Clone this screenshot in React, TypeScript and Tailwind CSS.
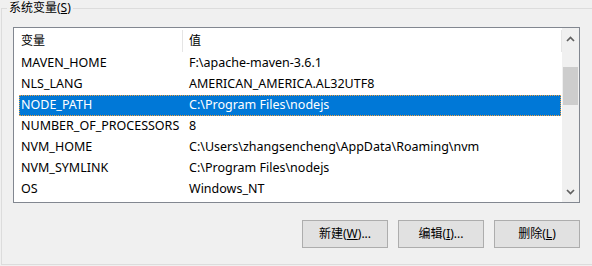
import React from "react";

const rows: [string, string][] = [
  ["MAVEN_HOME", "F:\\apache-maven-3.6.1"],
  ["NLS_LANG", "AMERICAN_AMERICA.AL32UTF8"],
  ["NODE_PATH", "C:\\Program Files\\nodejs"],
  ["NUMBER_OF_PROCESSORS", "8"],
  ["NVM_HOME", "C:\\Users\\zhangsencheng\\AppData\\Roaming\\nvm"],
  ["NVM_SYMLINK", "C:\\Program Files\\nodejs"],
  ["OS", "Windows_NT"],
];

const font = {
  fontFamily: '"Noto Sans", "Noto Sans CJK SC", sans-serif',
};

function Chevron({ up }: { up?: boolean }) {
  return (
    <svg width="9" height="6" viewBox="0 0 9 6" className="block">
      <path
        d={up ? "M1 5 L4.5 1.5 L8 5" : "M1 1 L4.5 4.5 L8 1"}
        fill="none"
        stroke="#606060"
        strokeWidth="1.7"
      />
    </svg>
  );
}

function Btn({ label, k }: { label: string; k: string }) {
  return (
    <button className="w-[86px] h-[28px] border border-[#adadad] bg-[#e1e1e1] text-[12px] text-black flex items-center justify-center leading-none">
      {label}(<span className="underline">{k}</span>){k === "L" ? "" : "..."}
    </button>
  );
}

export default function App() {
  return (
    <div
      className="w-[592px] h-[266px] bg-[#f0f0f0] overflow-hidden text-[12px] text-black"
      style={font}
    >
      <fieldset className="ml-[1px] w-[620px] h-[265px] border border-[#dcdcdc] pl-[11px]">
        <legend className="ml-[-6px] px-[2px] leading-[16px] text-[12px]">
          系统变量(<span className="underline">S</span>)
        </legend>
        <div className="mt-[11px] w-[567px] h-[176px] border border-[#828790] bg-white flex">
          <div className="flex-1 flex flex-col">
            <div className="h-[25px] flex items-start pl-[7px]">
              <div className="w-[161px] pt-[5px] leading-[16px]">变量</div>
              <div className="w-px h-[22px] bg-[#e5e5e5] mt-[2px]" />
              <div className="flex-1 pl-[6px] pt-[5px] leading-[16px]">值</div>
              <div className="w-px h-[22px] bg-[#e5e5e5] mt-[2px]" />
            </div>
            <div className="pl-[5px] pr-[1px] text-[12.5px]">
              {rows.map(([k, v]) => {
                const sel = k === "NODE_PATH";
                return (
                  <div
                    key={k}
                    className={
                      "h-[21px] flex items-center whitespace-nowrap " +
                      (sel
                        ? "bg-[#0078d7] text-white border border-dotted border-[#f0a040]"
                        : "border border-transparent")
                    }
                  >
                    <div className="w-[169px] pl-[1px]">{k}</div>
                    <div className="flex-1">{v}</div>
                  </div>
                );
              })}
            </div>
          </div>
          <div className="w-[17px] bg-[#f0f0f0] flex flex-col items-center">
            <div className="h-[17px] flex items-center justify-center mt-[2px]">
              <Chevron up />
            </div>
            <div className="mt-[20px] w-[15px] h-[38px] bg-[#cdcdcd]" />
            <div className="flex-1" />
            <div className="h-[17px] flex items-center justify-center mb-[2px]">
              <Chevron />
            </div>
          </div>
        </div>
        <div className="w-[567px] mt-[17px] flex justify-end gap-[10px]">
          <Btn label="新建" k="W" />
          <Btn label="编辑" k="I" />
          <Btn label="删除" k="L" />
        </div>
      </fieldset>
    </div>
  );
}
